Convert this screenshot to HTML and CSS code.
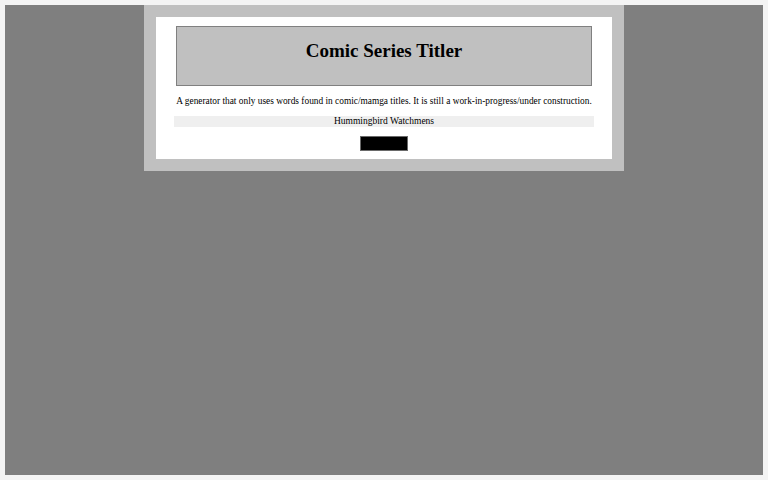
FILE: index.html
```html
<!DOCTYPE html>
<html lang="en">
<head>
    <meta charset="UTF-8">
    <meta name="viewport" content="width=device-width, initial-scale=1.0">
    <title>Comic Series Titler</title>
    <link rel="stylesheet" href="styles.css">
</head>
<body>
    <div class="screen">
        <div class="frame">
            <div class="card">
                <div class="header">
                    <h1>Comic Series Titler</h1>
                </div>
                <p class="intro">A generator that only uses words found in comic/mamga titles. It is still a work-in-progress/under construction.</p>
                <div class="output" id="output">Hummingbird Watchmens</div>
                <button class="generate" type="button"></button>
            </div>
        </div>
    </div>
</body>
</html>
```

FILE: styles.css
```css
html {
    background: #f4f4f4;
}
body {
    margin: 0;
    padding: 5px;
    font-family: "Liberation Serif", "Times New Roman", serif;
    color: #000;
}
.screen {
    background: #7f7f7f;
    height: 470px;
    display: flex;
    justify-content: center;
    align-items: flex-start;
}
.frame {
    width: 456px;
    padding: 12px;
    background: #c0c0c0;
}
.card {
    background: #fff;
    padding: 9px 18px 8px;
    display: flex;
    flex-direction: column;
    align-items: center;
}
.header {
    align-self: stretch;
    margin: 0 2px;
    height: 58px;
    background: #c0c0c0;
    border: 1px solid #808080;
    text-align: center;
}
.header h1 {
    margin: 0;
    padding-top: 12px;
    font-size: 19px;
    line-height: 23px;
}
.intro {
    margin: 9px 0 0;
    font-size: 9.35px;
    line-height: 12px;
    white-space: nowrap;
    text-align: center;
}
.output {
    align-self: stretch;
    margin-top: 9px;
    background: #efefef;
    font-size: 9.5px;
    line-height: 11px;
    text-align: center;
}
.generate {
    margin-top: 9px;
    width: 48px;
    height: 15px;
    padding: 0;
    background: #000;
    border: 1px solid #6a6a6a;
}
```
